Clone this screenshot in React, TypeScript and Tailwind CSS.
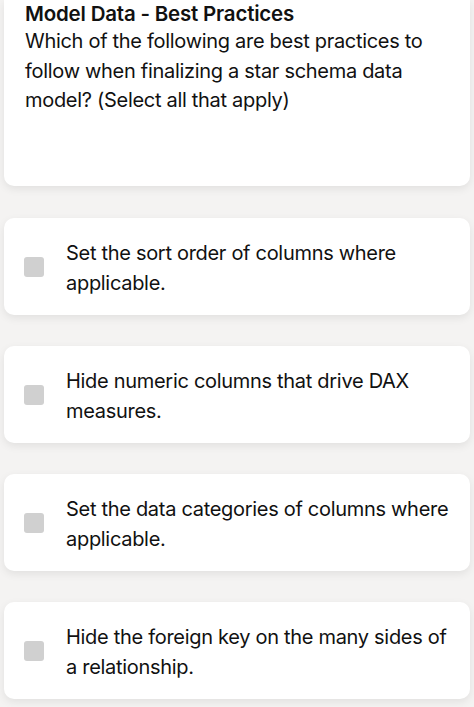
const OPTIONS = [
  'Set the sort order of columns where applicable.',
  'Hide numeric columns that drive DAX measures.',
  'Set the data categories of columns where applicable.',
  'Hide the foreign key on the many sides of a relationship.',
];

const FONT = "font-['Inter','Liberation_Sans',sans-serif]";

export default function App() {
  return (
    <div className={`${FONT} min-h-screen bg-[#f4f3f2] px-1 pb-3 text-[#111]`}>
      <div className="min-h-[186px] rounded-b-[10px] bg-white px-[21px] pb-4 shadow-[0_3px_8px_rgba(0,0,0,0.08)]">
        <h1 className="text-[20.5px] leading-[27px] font-semibold tracking-[-0.2px]">Model Data - Best Practices</h1>
        <p className="text-[20px] leading-[29.5px] tracking-[-0.3px]">
          Which of the following are best practices to follow when finalizing a star schema data model? (Select all that apply)
        </p>
      </div>

      <div className="mt-8 flex flex-col gap-[31px]">
        {OPTIONS.map((o) => (
          <label
            key={o}
            className="flex h-[97px] items-center gap-[22px] rounded-[10px] bg-white pt-1 pr-4 pl-5 shadow-[0_3px_8px_rgba(0,0,0,0.08)]"
          >
            <span className="-mt-1 h-5 w-5 shrink-0 rounded-[3px] bg-[#d0d0d0]" />
            <span className="text-[20px] leading-[29.5px] tracking-[-0.3px]">{o}</span>
          </label>
        ))}
      </div>
    </div>
  );
}
